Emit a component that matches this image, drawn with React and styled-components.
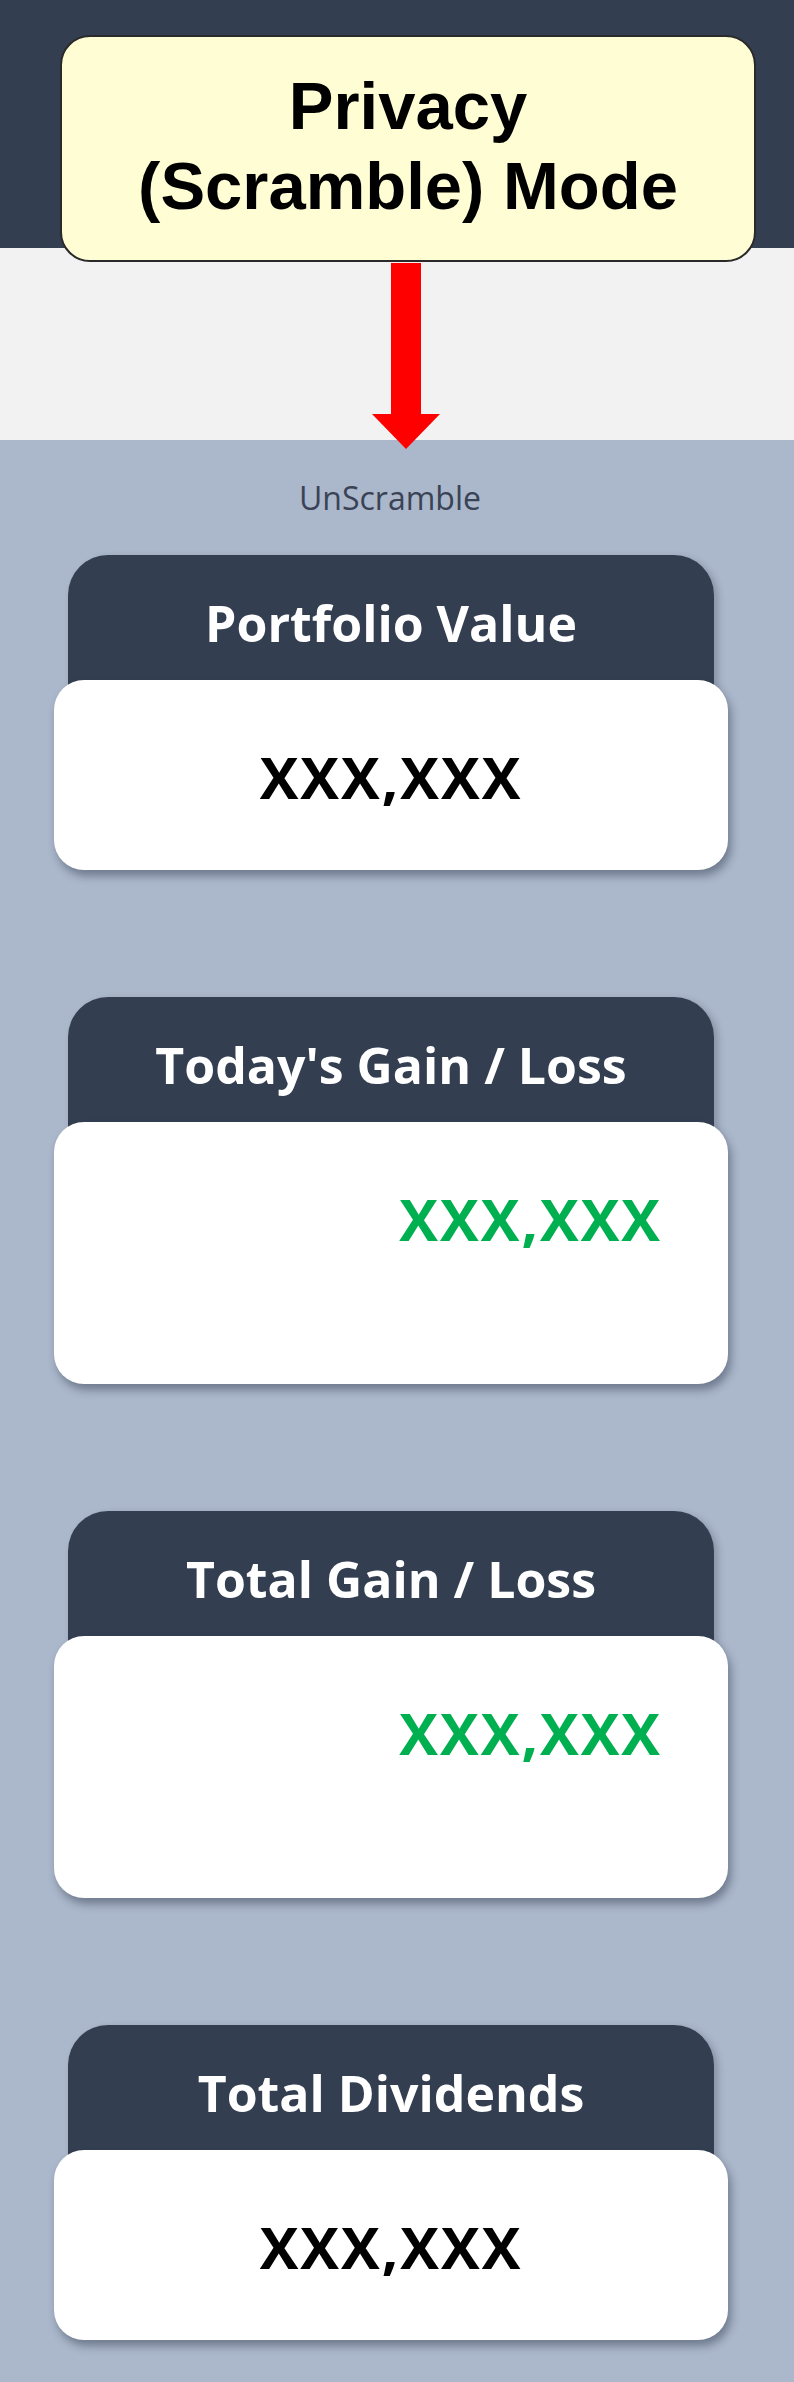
import React from 'react';
import styled, { createGlobalStyle } from 'styled-components';

const GlobalStyle = createGlobalStyle`
  html, body {
    margin: 0;
    padding: 0;
    background: #abb7ca;
  }
  * {
    box-sizing: border-box;
  }
`;

const Page = styled.div`
  width: 794px;
  min-height: 2382px;
  display: flex;
  flex-direction: column;
  overflow: hidden;
`;

//Dark top bar holding the annotation callout
const TopBar = styled.header`
  height: 248px;
  background: #333e50;
  padding-top: 35px;
`;

const Callout = styled.div`
  position: relative;
  z-index: 2;
  margin-left: 60px;
  width: 696px;
  height: 227px;
  border: 2px solid #2a2a2a;
  border-radius: 30px;
  background: #fefdd4;
  display: flex;
  flex-direction: column;
  align-items: center;
  justify-content: center;
  padding-bottom: 6px;
  font-family: 'Liberation Sans', Arial, sans-serif;
  font-weight: 700;
  font-size: 67px;
  line-height: 80px;
  color: #000;
  text-align: center;
`;

const Arrow = styled.svg`
  position: absolute;
  top: calc(100% + 3px);
  left: calc(50% - 36px);
  width: 68px;
  height: 186px;
`;

const GrayBand = styled.div`
  height: 192px;
  background: #f2f2f2;
`;

const Panel = styled.main`
  flex: 1;
  background: #abb7ca;
  border-top-right-radius: 22px;
  padding: 38px 0 42px;
  display: flex;
  flex-direction: column;
`;

const ToggleLabel = styled.div`
  font-family: 'Open Sans', 'Noto Sans', sans-serif;
  font-size: 32px;
  line-height: 40px;
  color: #3a4356;
  text-align: center;
  padding-right: 14px;
`;

const CardList = styled.div`
  display: flex;
  flex-direction: column;
  gap: 127px;
  margin-top: 37px;
`;

const Card = styled.section`
  margin-left: 54px;
  width: 674px;
`;

const CardHeader = styled.h2`
  margin: 0 14px;
  background: #333e51;
  border-radius: 40px 40px 0 0;
  padding: 38px 0 67px;
  text-align: center;
  color: #fff;
  font-family: 'Open Sans', 'Noto Sans', sans-serif;
  font-weight: 700;
  font-size: 50px;
  line-height: 60px;
  box-shadow: 4px 3px 7px rgba(30, 40, 60, 0.25);
`;

const CardBody = styled.div`
  position: relative;
  margin-top: -40px;
  height: ${props => (props.tall ? '262px' : '190px')};
  background: #fff;
  border-radius: 30px;
  box-shadow: 3px 6px 8px rgba(40, 50, 70, 0.45);
  padding: 62px 66px 0;
  text-align: ${props => (props.align === 'right' ? 'right' : 'center')};
`;

const Value = styled.span`
  font-family: 'Open Sans', 'Noto Sans', sans-serif;
  font-weight: 700;
  font-size: 58px;
  line-height: 70px;
  letter-spacing: 2px;
  color: ${props => (props.positive ? '#00b050' : '#000')};
`;

const cards = [
  { title: 'Portfolio Value', value: 'XXX,XXX' },
  { title: "Today's Gain / Loss", value: 'XXX,XXX', positive: true, tall: true },
  { title: 'Total Gain / Loss', value: 'XXX,XXX', positive: true, tall: true },
  { title: 'Total Dividends', value: 'XXX,XXX' }
];

const App = () => (
  <React.Fragment>
    <GlobalStyle />
    <Page>
      <TopBar>
        <Callout>
          <div>Privacy</div>
          <div>(Scramble) Mode</div>
          <Arrow viewBox="0 0 68 186">
            <rect x="19" y="0" width="30" height="151" fill="#ff0000" />
            <polygon points="0,151 68,151 34,186" fill="#ff0000" />
          </Arrow>
        </Callout>
      </TopBar>
      <GrayBand />
      <Panel>
        <ToggleLabel>UnScramble</ToggleLabel>
        <CardList>
          {cards.map(card => (
            <Card key={card.title}>
              <CardHeader>{card.title}</CardHeader>
              <CardBody tall={card.tall} align={card.positive ? 'right' : 'center'}>
                <Value positive={card.positive}>{card.value}</Value>
              </CardBody>
            </Card>
          ))}
        </CardList>
      </Panel>
    </Page>
  </React.Fragment>
);

export default App;
